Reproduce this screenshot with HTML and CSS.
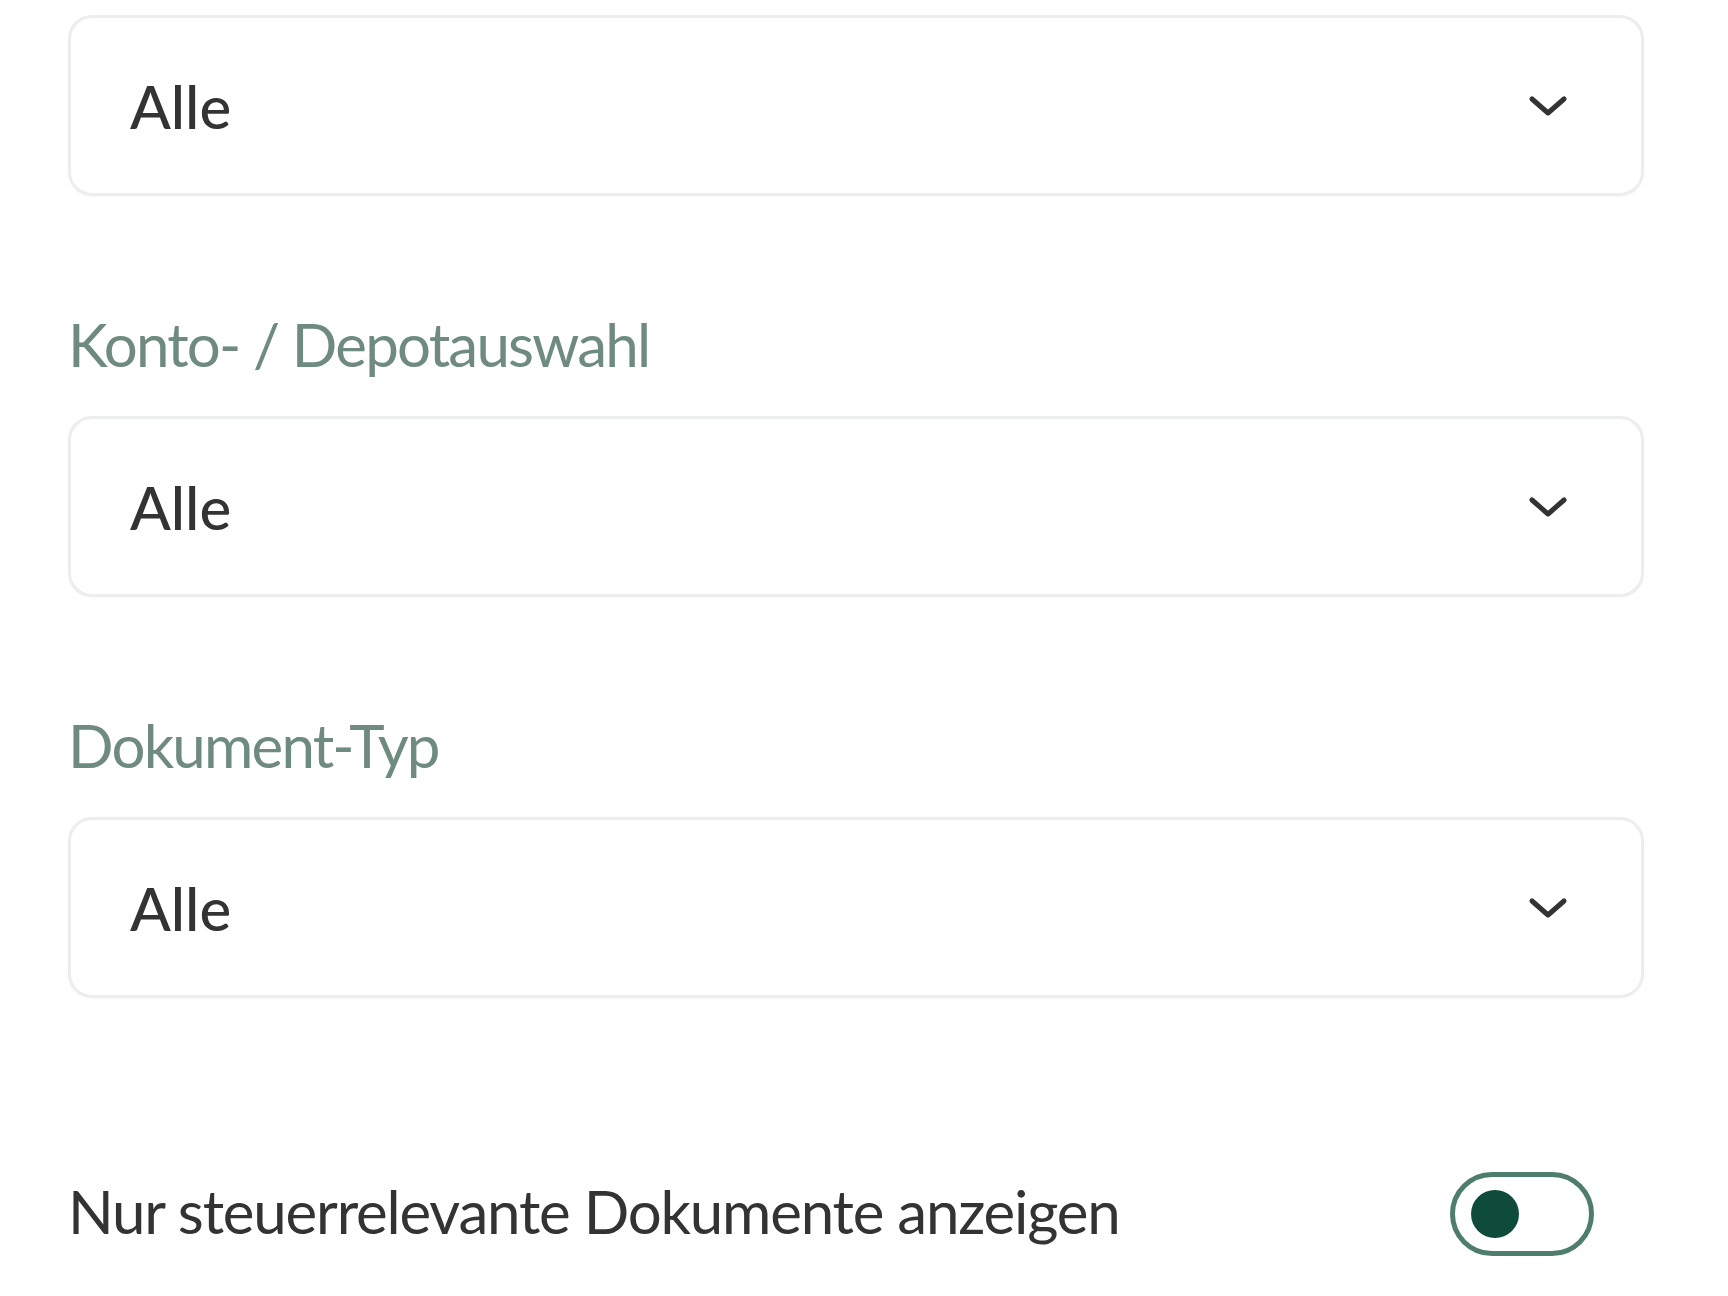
FILE: index.html
```html
<!DOCTYPE html>
<html lang="de">
<head>
  <meta charset="UTF-8" />
  <meta name="viewport" content="width=device-width, initial-scale=1.0"/>
  <title>Dokumente filtern</title>
  <link rel="stylesheet" href="styles.css">
</head>
<body>

  <div class="filters">
    <div class="field">
      <div class="select">
        <span class="select-value">Alle</span>
        <svg class="chevron" viewBox="0 0 42 24" width="42" height="24">
          <polyline points="5,5 21,19 37,5" />
        </svg>
      </div>
    </div>

    <div class="field">
      <label class="field-label">Konto- / Depotauswahl</label>
      <div class="select">
        <span class="select-value">Alle</span>
        <svg class="chevron" viewBox="0 0 42 24" width="42" height="24">
          <polyline points="5,5 21,19 37,5" />
        </svg>
      </div>
    </div>

    <div class="field">
      <label class="field-label">Dokument-Typ</label>
      <div class="select">
        <span class="select-value">Alle</span>
        <svg class="chevron" viewBox="0 0 42 24" width="42" height="24">
          <polyline points="5,5 21,19 37,5" />
        </svg>
      </div>
    </div>

    <div class="toggle-row">
      <span class="toggle-text">Nur steuerrelevante Dokumente anzeigen</span>
      <div class="toggle">
        <div class="toggle-knob"></div>
      </div>
    </div>
  </div>

</body>
</html>
```

FILE: styles.css
```css
:root {
  --text-color: #333333;
  --label-color: #6f8a7e;
  --border-color: #eceeed;
  --brand-dark: #0f4b3b;
  --brand-soft: #4e7c6d;
}

body {
  margin: 0;
  background: #ffffff;
  font-family: Lato, "Open Sans", sans-serif;
  color: var(--text-color);
}

.filters {
  display: flex;
  flex-direction: column;
  gap: 112px;
  padding: 15px 84px 0 68px;
}

.field {
  display: flex;
  flex-direction: column;
}

.field-label {
  font-size: 60px;
  line-height: 72px;
  letter-spacing: -1.8px;
  color: var(--label-color);
  margin-bottom: 36px;
}

.select {
  height: 181px;
  box-sizing: border-box;
  border: 3px solid var(--border-color);
  border-radius: 24px;
  background: #fff;
  box-shadow: 0 1px 3px rgba(0, 0, 0, 0.03);
  display: flex;
  align-items: center;
  justify-content: space-between;
  padding: 0 72px 0 59px;
}

.select-value {
  font-size: 60px;
  line-height: 72px;
  font-weight: 500;
  color: var(--text-color);
}

.chevron polyline {
  fill: none;
  stroke: #333;
  stroke-width: 5;
  stroke-linecap: round;
  stroke-linejoin: round;
}

.toggle-row {
  display: flex;
  align-items: center;
  justify-content: space-between;
  margin-top: 62px;
  padding-right: 50px;
}

.toggle-text {
  font-size: 60px;
  line-height: 72px;
  letter-spacing: -1.2px;
  padding-bottom: 6px;
  color: var(--text-color);
}

.toggle {
  width: 144px;
  height: 84px;
  box-sizing: border-box;
  border: 5px solid var(--brand-soft);
  border-radius: 42px;
  display: flex;
  align-items: center;
  padding-left: 16px;
}

.toggle-knob {
  width: 48px;
  height: 48px;
  border-radius: 50%;
  background: var(--brand-dark);
}
```
